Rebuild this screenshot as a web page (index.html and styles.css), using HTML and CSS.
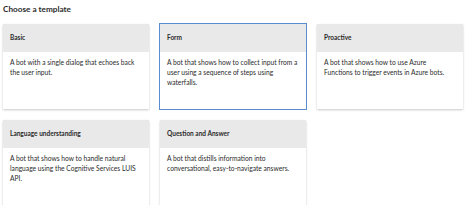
FILE: index.html
```html
<!DOCTYPE html>
<html lang="en">
<head>
  <meta charset="UTF-8" />
  <title>Choose a template</title>
  <link rel="stylesheet" href="styles.css">
</head>
<body>

<h1 class="page-title">Choose a template</h1>

<div class="template-grid">
  <div class="template-card">
    <div class="card-head">Basic</div>
    <div class="card-body">A bot with a single dialog that echoes back the user input.</div>
  </div>
  <div class="template-card selected">
    <div class="card-head">Form</div>
    <div class="card-body">A bot that shows how to collect input from a user using a sequence of steps using waterfalls.</div>
  </div>
  <div class="template-card">
    <div class="card-head">Proactive</div>
    <div class="card-body">A bot that shows how to use Azure Functions to trigger events in Azure bots.</div>
  </div>
  <div class="template-card">
    <div class="card-head">Language understanding</div>
    <div class="card-body">A bot that shows how to handle natural language using the Cognitive Services LUIS API.</div>
  </div>
  <div class="template-card">
    <div class="card-head">Question and Answer</div>
    <div class="card-body">A bot that distills information into conversational, easy-to-navigate answers.</div>
  </div>
</div>

</body>
</html>
```

FILE: styles.css
```css
body {
  font-family: Lato, "Open Sans", sans-serif;
  margin: 0;
  padding: 3px 3px 0 3px;
  background-color: #ffffff;
  color: #2b2b2b;
}
.page-title {
  font-size: 8.2px;
  font-weight: 700;
  margin: 0;
  height: 21px;
  line-height: 12px;
}
.template-grid {
  display: grid;
  grid-template-columns: repeat(3, 146px);
  grid-auto-rows: 85px;
  gap: 11px;
}
.template-card {
  background: white;
  box-shadow: 0 0.5px 2px rgba(0,0,0,0.22);
  display: flex;
  flex-direction: column;
}
.template-card.selected {
  outline: 1px solid #5a8dd0;
  box-shadow: 0 0 0 1px #8fb2e0;
}
.card-head {
  background-color: #e9e9e9;
  height: 28px;
  line-height: 28px;
  padding: 0 7px;
  font-size: 6.5px;
  font-weight: 700;
}
.card-body {
  padding: 5px 7px 0 7px;
  font-size: 6.7px;
  line-height: 10px;
}
```
